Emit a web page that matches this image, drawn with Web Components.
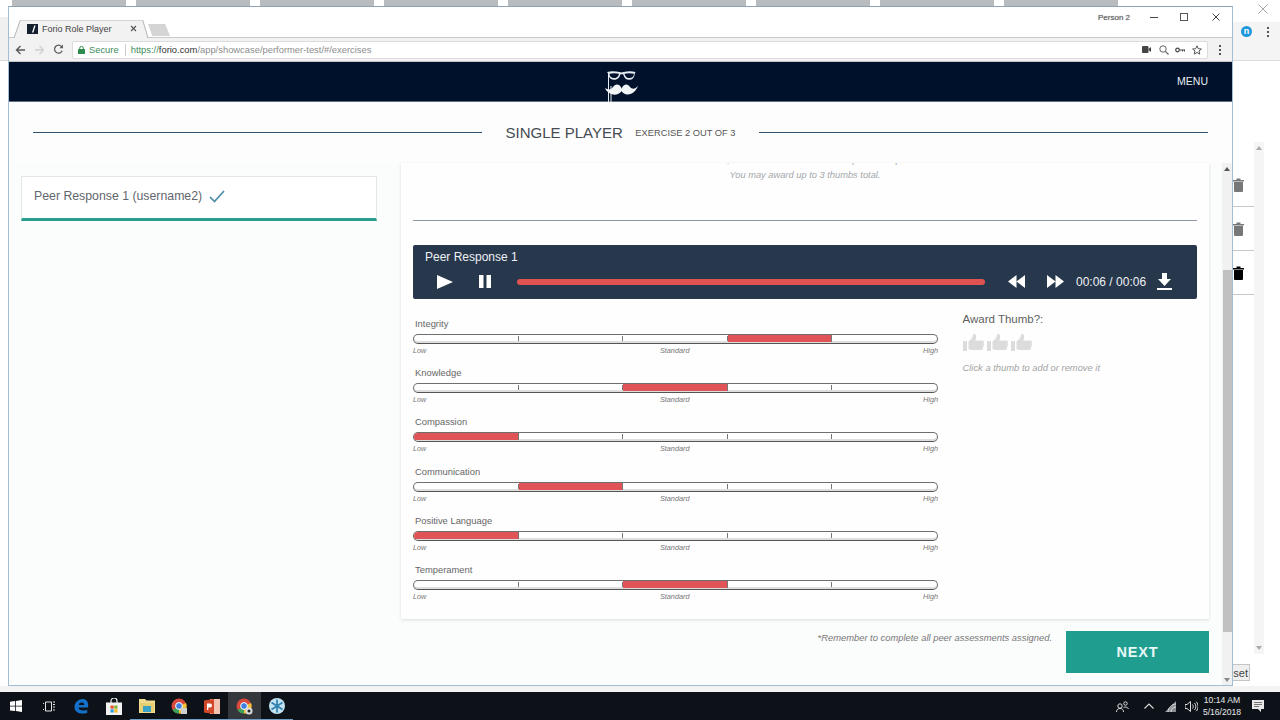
<!DOCTYPE html>
<html lang="en">
<head>
<meta charset="utf-8">
<title>Forio Role Player</title>
<style>
  html, body { margin: 0; height: 100%; overflow: hidden; background: #fff; }
  body { font-family: "Liberation Sans", Arial, sans-serif; display: flex; flex-direction: column; width: 1280px; height: 720px; }
</style>
</head>
<body>

<desk-top>
  <back-window></back-window>
  <browser-window tab-title="Forio Role Player" profile="Person 2">
    <app-nav></app-nav>
    <page-heading sub="EXERCISE 2 OUT OF 3">SINGLE PLAYER</page-heading>
    <exercise-view>
      <peer-card slot="side">Peer Response 1 (username2)</peer-card>
      <audio-bar title-text="Peer Response 1" time="00:06 / 00:06"></audio-bar>
      <rating-slider slot="ratings" level="3">Integrity</rating-slider>
      <rating-slider slot="ratings" level="2">Knowledge</rating-slider>
      <rating-slider slot="ratings" level="0">Compassion</rating-slider>
      <rating-slider slot="ratings" level="1">Communication</rating-slider>
      <rating-slider slot="ratings" level="0">Positive Language</rating-slider>
      <rating-slider slot="ratings" level="2">Temperament</rating-slider>
      <award-thumbs slot="award"></award-thumbs>
    </exercise-view>
  </browser-window>
</desk-top>
<task-bar></task-bar>

<script>
  (function page(customElements) {
    'use strict';

    // small helper, every element just sets its own shadow markup
    class Base extends HTMLElement {
      constructor() {
        super();
        this.attachShadow({mode: 'open'});
      }
      render(html) {
        this.shadowRoot.innerHTML = html;
      }
    }

    class DeskTop extends Base {
      connectedCallback() {
        this.render(`
          <style>
            :host { display: block; position: relative; height: 692px; background: #f3f3f3; overflow: hidden; }
          </style>
          <slot></slot>`);
      }
    }

    // the window behind the main one, only its edges show
    class BackWindow extends Base {
      connectedCallback() {
        const trash = (x, y, fill) => `
          <svg class="trash" style="left:${x}px;top:${y}px" width="11" height="14" viewBox="0 0 11 14">
            <path fill="${fill}" d="M0 2h11v1.4H0zM3.5 0.6h4V2h-4zM1 4h9v9a1 1 0 0 1-1 1H2a1 1 0 0 1-1-1z"/>
          </svg>`;
        this.render(`
          <style>
            :host { position: absolute; inset: 0 0 6px 0; background: #fff; display: block; }
            .tabs { display: flex; gap: 10px; padding-left: 12px; height: 6px; }
            .tabs i { width: 114px; background: #b9bcbf; }
            .tool { position: absolute; left: 1233px; right: 0; top: 22px; height: 38px; background: #f4f4f4; border-bottom: 1px solid #ddd; }
            .left { position: absolute; left: 0; top: 17px; width: 8px; height: 43px; background: #f0f0f0; border-bottom: 1px solid #d8d8d8; }
            .x { position: absolute; left: 1258px; top: 4px; }
            .n { position: absolute; left: 1241px; top: 26px; width: 11px; height: 11px; border-radius: 50%; background: #1f97dc; color: #fff; font: bold 9px/10px "Liberation Sans", sans-serif; text-align: center; }
            .dots { position: absolute; left: 1267px; top: 27px; width: 2px; height: 2px; background: #555; box-shadow: 0 4px #555, 0 8px #555; }
            .rule { position: absolute; left: 1233px; width: 21px; height: 1px; background: #c8c8c8; }
            .bar { position: absolute; left: 1254px; top: 142px; width: 10px; height: 512px; background: #f5f5f5; }
            .bar::before { content: ""; position: absolute; left: 2px; top: 4px; border: 3px solid transparent; border-bottom: 4px solid #aaa; border-top: 0; }
            .bar::after { content: ""; position: absolute; left: 2px; bottom: 4px; border: 3px solid transparent; border-top: 4px solid #aaa; border-bottom: 0; }
            .trash { position: absolute; }
            .set { position: absolute; left: 1228px; top: 664px; width: 22px; height: 17px; border: 1px solid #c4c4c4; background: #efefef; color: #444; font: 11px/17px "Liberation Sans", sans-serif; text-align: right; padding-right: 1px; box-sizing: border-box; overflow: hidden; }
          </style>
          <div class="tabs"><i></i><i></i><i></i><i></i><i></i><i></i><i></i><i></i><i></i></div>
          <div class="left"></div>
          <div class="tool"></div>
          <svg class="x" width="10" height="10" viewBox="0 0 10 10"><path d="M0.5 0.5l9 9M9.5 0.5l-9 9" stroke="#a5a5a5" fill="none"/></svg>
          <div class="n">n</div>
          <div class="dots"></div>
          ${trash(1233, 178, '#777')}
          ${trash(1233, 222, '#777')}
          ${trash(1233, 266, '#000')}
          <div class="rule" style="top:206px"></div>
          <div class="rule" style="top:250px"></div>
          <div class="rule" style="top:294px"></div>
          <div class="bar"></div>
          <div class="set">set</div>`);
      }
    }

    class BrowserWindow extends Base {
      connectedCallback() {
        const title = this.getAttribute('tab-title');
        const profile = this.getAttribute('profile');
        this.render(`
          <style>
            :host { position: absolute; left: 8px; top: 6px; width: 1225px; height: 680px; box-sizing: border-box; border: 1px solid #a3bdd3; border-top-color: #8ea4b6; background: #fbfcfc; display: flex; flex-direction: column; overflow: hidden; }
            .strip { height: 30px; background: #fff; display: flex; position: relative; flex: none; }
            .tab { position: relative; margin: 13px 0 0 5px; width: 134px; height: 18px; display: flex; align-items: center; padding: 0 0 0 13px; box-sizing: border-box; font-size: 9px; color: #444; }
            .tab svg.shape { position: absolute; left: 0; top: 0; }
            .tab span, .tab svg.fav, .tab svg.close { position: relative; }
            .tab svg.fav { margin-right: 4px; }
            .tab svg.close { position: absolute; left: 116px; top: 5px; }
            .newtab { margin: 17px 0 0 0; width: 22px; height: 12px; background: #d4d4d4; clip-path: polygon(0 0, 78% 0, 100% 100%, 20% 100%); }
            .controls { margin-left: auto; display: flex; align-items: center; height: 20px; font-size: 8px; color: #666; }
            .controls span { width: 41px; text-shadow: 0 0 1px #888; }
            .controls svg { display: block; }
            .ctl { width: 30px; display: flex; justify-content: center; }
            .tool { height: 25px; flex: none; background: #f2f2f2; border-top: 1px solid #c9c9c9; border-bottom: 1px solid #c4c4c4; box-sizing: border-box; display: flex; align-items: center; }
            .nav { width: 19px; display: flex; justify-content: center; }
            .omni { margin-left: 4px; width: 1137px; height: 18px; box-sizing: border-box; background: #fff; border: 1px solid #dcdcdc; border-radius: 2px; display: flex; align-items: center; font-size: 9.4px; color: #8d8d8d; padding-left: 5px; }
            .omni .sec { color: #3c8c58; margin: 0 6px 0 4px; font-size: 9.4px; }
            .omni .sep { width: 1px; height: 12px; background: #ccc; margin-right: 5px; }
            .omni .sch { color: #3c8c58; }
            .omni .dom { color: #333; }
            .right { margin-left: auto; display: flex; align-items: center; gap: 0; padding-right: 2px; }
            .right b { width: 16.6px; display: flex; justify-content: center; }
            .menu { width: 24px; display: flex; justify-content: center; }
            .page { flex: 1; min-height: 0; display: flex; flex-direction: column; }
          </style>
          <div class="strip">
            <div class="tab">
              <svg class="shape" width="136" height="18" viewBox="0 0 136 18"><path d="M0 18L6 1a1 1 0 0 1 1-1H128a1 1 0 0 1 1 1l5 17" fill="#f2f2f2" stroke="#b5b5b5"/></svg>
              <svg class="fav" width="11" height="10" viewBox="0 0 11 10"><rect width="11" height="10" fill="#14202e"/><path d="M5 8.5L7.2 1.5h1.4L6.4 8.5z" fill="#fff"/></svg>
              <span>${title}</span>
              <svg class="close" width="7" height="7" viewBox="0 0 7 7"><path d="M1 1l5 5M6 1l-5 5" stroke="#555" stroke-width="1.1"/></svg>
            </div>
            <div class="newtab"></div>
            <div class="controls">
              <span>${profile}</span>
              <div class="ctl"><svg width="8" height="8" viewBox="0 0 8 8"><path d="M0 4.5h8" stroke="#444"/></svg></div>
              <div class="ctl"><svg width="8" height="8" viewBox="0 0 8 8"><rect x="0.5" y="0.5" width="7" height="7" fill="none" stroke="#555"/></svg></div>
              <div class="ctl" style="width:33px"><svg width="8" height="8" viewBox="0 0 8 8"><path d="M0.5 0.5l7 7M7.5 0.5l-7 7" stroke="#444"/></svg></div>
            </div>
          </div>
          <div class="tool">
            <div class="nav" style="margin-left:2px"><svg width="11" height="10" viewBox="0 0 11 10"><path d="M10 5H2M5.5 1L1.5 5l4 4" fill="none" stroke="#5a5a5a" stroke-width="1.4"/></svg></div>
            <div class="nav"><svg width="11" height="10" viewBox="0 0 11 10"><path d="M1 5h8M5.5 1l4 4-4 4" fill="none" stroke="#d0d0d0" stroke-width="1.4"/></svg></div>
            <div class="nav"><svg width="11" height="11" viewBox="0 0 11 11"><path d="M9.2 6.8A4 4 0 1 1 8.6 2.6" fill="none" stroke="#5a5a5a" stroke-width="1.3"/><path d="M10 0.6v3.6H6.4z" fill="#5a5a5a"/></svg></div>
            <div class="omni">
              <svg width="7" height="8" viewBox="0 0 7 8"><rect y="3" width="7" height="5" rx="0.6" fill="#2f8a4e"/><path d="M1.7 3.5V2.2a1.8 1.8 0 0 1 3.6 0v1.3" fill="none" stroke="#2f8a4e"/></svg>
              <span class="sec">Secure</span><span class="sep"></span>
              <span><span class="sch">https://</span><span class="dom">forio.com</span>/app/showcase/performer-test/#/exercises</span>
              <div class="right">
                <b><svg width="9" height="7" viewBox="0 0 9 7"><rect width="6.5" height="7" rx="1" fill="#444"/><path d="M6.5 3L9 1v5L6.5 4z" fill="#444"/></svg></b>
                <b><svg width="10" height="10" viewBox="0 0 10 10"><circle cx="4" cy="4" r="3.2" fill="none" stroke="#666"/><path d="M6.4 6.4L9.5 9.5" stroke="#666" stroke-width="1.2"/></svg></b>
                <b><svg width="10" height="6" viewBox="0 0 10 6"><circle cx="2.5" cy="3" r="1.8" fill="none" stroke="#444" stroke-width="1.2"/><path d="M4.5 2.5H10V4.5H9V3.6H8V4.5H7V3.6H4.5z" fill="#444"/></svg></b>
                <b><svg width="10" height="10" viewBox="0 0 10 10"><path d="M5 0.8l1.3 2.9 3.1.3-2.4 2 .8 3.1L5 7.5 2.200 9.100 3 6 .6 4l3.100-.3z" fill="none" stroke="#444" stroke-width="0.9"/></svg></b>
              </div>
            </div>
            <div class="menu"><svg width="2" height="10" viewBox="0 0 2 10"><path d="M0 0h2v2H0zM0 4h2v2H0zM0 8h2v2H0z" fill="#555"/></svg></div>
          </div>
          <div class="page"><slot></slot></div>`);
      }
    }

    class AppNav extends Base {
      connectedCallback() {
        this.render(`
          <style>
            :host { display: flex; flex: none; height: 40px; background: #00112b; border-bottom: 1px solid #5c6f80; box-sizing: border-box; justify-content: center; position: relative; }
            svg { display: block; }
            .menu { position: absolute; right: 24px; top: 0; line-height: 38px; color: #e8edf2; font-size: 10.5px; }
          </style>
          <svg width="40" height="40" viewBox="0 0 40 40">
            <path d="M7.5 11v29M10 40V24" stroke="#e6ecf2" stroke-width="1" fill="none"/>
            <path d="M6 10c4-1.200 8-1 12.500 0 1.500.6 2.500.6 4 0 4-1 8-1.200 12 0l-.7 1.500c-.5 3.500-1.500 6-5 6.200-3.800.2-5.500-1.500-6.500-5.200-.8-.5-1.800-.5-3 0-.8 3.700-3 5.200-6.500 5.200-3.500-.1-5-2.500-5.500-6z" fill="#e6ecf2"/>
            <path d="M8.500 11.700c3-.7 6.500-.7 9.500 0-.6 3-2.500 4.400-5 4.400-2.700 0-4.200-1.500-4.500-4.400zM23.500 11.700c3-.7 6.500-.7 9.500 0-.3 2.900-1.800 4.400-4.500 4.400-2.500 0-4.400-1.400-5-4.400z" fill="#00112b"/>
            <path d="M20.500 26C18 21 14 22 12 25 10 28 7 28 4 26 6 31 12 34 17 32c2-1 3-2 3.500-3 .5 1 2.500 3 5.500 3.500 5 .5 9-3.500 11-8.500-4 4-6 3-8 1-2-3-6-4-8.500 2z" fill="#f2f5f7"/>
          </svg>
          <div class="menu">MENU</div>`);
      }
    }

    class PageHeading extends Base {
      connectedCallback() {
        this.render(`
          <style>
            :host { display: flex; flex: none; height: 61px; align-items: center; padding: 0 24px; background: #fdfdfd; color: #454b52; }
            .line { flex: 1; height: 1px; background: #33526d; }
            .title { font-size: 15px; margin: 0 12.500px 0 24px; line-height: 20px; }
            .sub { font-size: 9.300px; margin-right: 24px; color: #555; }
          </style>
          <div class="line"></div>
          <div class="title"><slot></slot></div>
          <div class="sub">${this.getAttribute('sub')}</div>
          <div class="line"></div>`);
      }
    }

    class ExerciseView extends Base {
      connectedCallback() {
        this.render(`
          <style>
            :host { display: flex; flex: 1; min-height: 0; padding-left: 12px; }
            .side { width: 356px; flex: none; padding-top: 13px; margin-right: 24px; }
            .col { width: 808px; flex: none; display: flex; flex-direction: column; }
            .panel { height: 456px; flex: none; background: #fefefe; box-shadow: 0 1px 3px rgba(0,0,0,.13); padding: 0 12px; box-sizing: border-box; overflow: hidden; }
            .note { margin-top: -10px; text-align: center; font-style: italic; font-size: 9.300px; line-height: 15px; color: #a4a7ab; }
            hr { border: 0; height: 1px; background: #8d95a6; margin: 37px 0 24px; }
            .rates { display: flex; margin-top: 18px; }
            .rows { width: 525px; flex: none; }
            .award { margin-left: 24.500px; }
            .foot { display: flex; justify-content: flex-end; padding-top: 12px; }
            .remind { font-size: 9.400px; font-style: italic; color: #777; line-height: 14px; margin-right: 14px; }
            .next { width: 143px; height: 42px; background: #1f9e90; color: #e8f8f6; font-weight: bold; font-size: 14.500px; letter-spacing: .8px; display: flex; align-items: center; justify-content: center; }
            .scroll { width: 10px; margin-left: 13px; flex: none; background: #f1f1f1; position: relative; }
            .thumb { position: absolute; left: 1px; right: 0; top: 107px; height: 362px; background: #c1c1c1; }
            .up, .down { position: absolute; left: 2px; border: 3px solid transparent; }
            .up { top: 4px; border-top: 0; border-bottom: 4px solid #555; }
            .down { bottom: 3px; border-bottom: 0; border-top: 4px solid #888; }
          </style>
          <div class="side"><slot name="side"></slot></div>
          <div class="col">
            <div class="panel">
              <div class="note">Remember, thumbs are awarded for exceptional responses.<br>You may award up to 3 thumbs total.</div>
              <hr>
              <slot></slot>
              <div class="rates">
                <div class="rows"><slot name="ratings"></slot></div>
                <div class="award"><slot name="award"></slot></div>
              </div>
            </div>
            <div class="foot">
              <div class="remind">*Remember to complete all peer assessments assigned.</div>
              <div class="next">NEXT</div>
            </div>
          </div>
          <div class="scroll"><i class="up"></i><div class="thumb"></div><i class="down"></i></div>`);
      }
    }

    class PeerCard extends Base {
      connectedCallback() {
        this.render(`
          <style>
            :host { display: flex; align-items: center; height: 45px; box-sizing: border-box; padding: 0 12px 3px; background: #fff; border: 1px solid #e6e6e6; border-bottom: 3px solid #2a9d90; font-size: 12.300px; color: #5f666d; }
            svg { margin-left: 7px; }
          </style>
          <slot></slot>
          <svg width="16" height="13" viewBox="0 0 16 13"><path d="M1 7l4.500 4.500L15 1" fill="none" stroke="#4a8ca8" stroke-width="1.700"/></svg>`);
      }
    }

    class AudioBar extends Base {
      connectedCallback() {
        this.render(`
          <style>
            :host { display: block; height: 54px; background: #27384d; border-radius: 2px; color: #eef1f4; box-sizing: border-box; padding: 5px 12px 0; }
            .name { font-size: 12px; line-height: 14px; }
            .row { display: flex; align-items: center; height: 27px; margin-top: 4px; }
            svg { display: block; flex: none; }
            .bar { width: 468px; height: 6px; background: #df5353; border-radius: 3px; margin: 0 23px 0 26px; flex: none; }
            .time { font-size: 12px; width: 70px; margin: 0 11px 0 12px; white-space: nowrap; }
          </style>
          <div class="name">${this.getAttribute('title-text')}</div>
          <div class="row">
            <svg style="margin-left:12px" width="16" height="14" viewBox="0 0 16 14"><path d="M0 0l16 7-16 7z" fill="#fff"/></svg>
            <svg style="margin-left:26px" width="12" height="13" viewBox="0 0 12 13"><path d="M0 0h4.500v13H0zM7.500 0H12v13H7.500z" fill="#fff"/></svg>
            <div class="bar"></div>
            <svg width="17" height="13" viewBox="0 0 17 13"><path d="M8.500 0v13L0 6.500zM17 0v13L8.500 6.500z" fill="#fff"/></svg>
            <svg style="margin-left:22px" width="17" height="13" viewBox="0 0 17 13"><path d="M0 0v13l8.500-6.500zM8.500 0v13L17 6.500z" fill="#fff"/></svg>
            <div class="time">${this.getAttribute('time')}</div>
            <svg width="15" height="17" viewBox="0 0 15 17"><path d="M5 0h5v6h4l-6.500 7L1 6h4z" fill="#fff"/><path d="M0 15h15v2H0z" fill="#fff"/></svg>
          </div>`);
      }
    }

    class RatingSlider extends Base {
      connectedCallback() {
        const level = Number(this.getAttribute('level'));
        let cells = '';
        for (let i = 0; i < 5; i++) {
          cells += `<i class="${i === level ? 'on' : ''}"></i>`;
        }
        this.render(`
          <style>
            :host { display: block; height: 49.200px; box-sizing: border-box; color: #666; }
            .label { font-size: 9.400px; line-height: 14px; padding-left: 2px; height: 17px; }
            .track { height: 10px; box-sizing: border-box; border: 1px solid #6f6f6f; border-bottom-color: #555; border-radius: 5px; background: #fff; display: grid; grid-template-columns: repeat(5, 1fr); overflow: hidden; box-shadow: inset 0 -2px 0 #dedede; }
            i { display: block; border-right: 1px solid #777; margin: 1px 0 2px; }
            i:last-child { border-right: 0; }
            i.on { background: #e05458; margin: 0 0 1px; }
            .scale { display: flex; justify-content: space-between; font-size: 7.300px; font-style: italic; line-height: 14px; color: #777; }
          </style>
          <div class="label"><slot></slot></div>
          <div class="track">${cells}</div>
          <div class="scale"><span>Low</span><span>Standard</span><span>High</span></div>`);
      }
    }

    class AwardThumbs extends Base {
      connectedCallback() {
        const thumb = `<svg width="24" height="17" viewBox="0 0 24 17"><path d="M0 7h4v10H0zM5.500 7.500c2-1.500 4-3.500 5-7.500 2.500-.3 3.500 2 2 6.500H19c2 0 2.500 2 1.500 3 .8 1 .5 2.500-.5 3 .3 1 0 2.500-1.500 3.500H9c-1.500 0-2.500-.5-3.500-1z" fill="#dcdcdc"/></svg>`;
        this.render(`
          <style>
            :host { display: block; }
            .head { font-size: 11.500px; line-height: 14px; color: #5f5f5f; margin-top: -5px; }
            .thumbs { display: flex; margin-top: 8px; height: 17px; }
            svg { display: block; }
            .hint { font-size: 9.400px; font-style: italic; color: #a3a3a3; margin-top: 11px; line-height: 12px; white-space: nowrap; }
          </style>
          <div class="head">Award Thumb?:</div>
          <div class="thumbs">${thumb}${thumb}${thumb}</div>
          <div class="hint">Click a thumb to add or remove it</div>`);
      }
    }

    class TaskBar extends Base {
      connectedCallback() {
        const chrome = (extra) => `<svg width="17" height="17" viewBox="0 0 17 17"><circle cx="8" cy="8" r="7.500" fill="#d8493c"/><path d="M8 8L1.500 12A7.500 7.500 0 0 0 8 15.500z" fill="#3da35a"/><path d="M8 8v7.500a7.500 7.500 0 0 0 7-10.500z" fill="#f1c233"/><circle cx="8" cy="8" r="3.400" fill="#3f7fe0" stroke="#fff"/>${extra}</svg>`;
        this.render(`
          <style>
            :host { display: flex; height: 28px; flex: none; background: #0d1219; align-items: stretch; position: relative; color: #e8e8e8; }
            .cell { width: 32.600px; display: flex; align-items: center; justify-content: center; box-sizing: border-box; }
            .cell.run { border-bottom: 1px solid #6f9ec7; padding-top: 1px; }
            .cell.cur { background: #34373c; }
            svg { display: block; }
            .tray { margin-left: auto; display: flex; padding-right: 5.500px; }
            .tray div { display: flex; align-items: center; justify-content: center; }
            .clock { font-size: 8.600px; line-height: 12px; text-align: center; white-space: nowrap; flex-direction: column; width: 39px; }
          </style>
          <div class="cell"><svg width="12" height="12" viewBox="0 0 12 12"><path d="M0 1.700l5-.7v4.700H0zM5.800.9L12 0v5.700H5.800zM0 6.400h5v4.700l-5-.7zM5.800 6.400H12V12l-6.200-.9z" fill="#fff"/></svg></div>
          <div class="cell"><svg width="12" height="11" viewBox="0 0 12 11"><path d="M2.500 1h6v9h-6zM0 2.500h1M0 8.500h1M10 1h2M10 3.500h2M10 6h2M10 9h2" fill="none" stroke="#e4e4e4"/></svg></div>
          <div class="cell"><svg width="15" height="15" viewBox="0 0 15 15"><path d="M14 8.500H4.500c.2 2.600 3.800 4.200 8.700 2.200v3c-5.700 2.200-12.700.4-12.700-5.700C.5 3 5 0 8.500 0 12.500 0 15 3 14 8.500zM10.300 6c0-3.200-5-3.200-5.600 0z" fill="#1570c9"/></svg></div>
          <div class="cell"><svg width="16" height="17" viewBox="0 0 16 17"><path d="M0 4.500h16V17H0z" fill="#f2f2f2"/><path d="M5 5V3a3 3 0 0 1 6 0v2" fill="none" stroke="#f2f2f2" stroke-width="1.200"/><path d="M4.500 7.500h3.200v3.200H4.500z" fill="#e2522f"/><path d="M8.300 7.500h3.200v3.200H8.300z" fill="#7fb52c"/><path d="M4.500 11.300h3.200v3.200H4.500z" fill="#2a9be0"/><path d="M8.300 11.300h3.200v3.200H8.300z" fill="#f4b81c"/></svg></div>
          <div class="cell run"><svg width="16" height="14" viewBox="0 0 16 14"><path d="M0 0h6l1.500 1.500H16V14H0z" fill="#f0dc8c"/><path d="M1 4h14v9H1z" fill="#e8cf72"/><path d="M4 7h8v6H4z" fill="#3ba3c8"/></svg></div>
          <div class="cell run">${chrome('<path d="M10 10h6v6h-6z" fill="#cfcfcf"/>')}</div>
          <div class="cell run"><svg width="16" height="15" viewBox="0 0 16 15"><path d="M6 0h10v15H6z" fill="#f4c4b2"/><path d="M0 1.500l10-1.500v15L0 13.500z" fill="#d1492a"/><path d="M3 4.500h3a2 2 0 0 1 0 4H4.300v2.500H3z" fill="#fff"/></svg></div>
          <div class="cell run cur">${chrome('<circle cx="13" cy="13" r="3.500" fill="#dcdcdc"/><circle cx="13" cy="13" r="1.500" fill="#222"/>')}</div>
          <div class="cell run"><svg width="16" height="16" viewBox="0 0 16 16"><circle cx="8" cy="8" r="8" fill="#c4e3f2"/><path d="M8 1.500v13M2.500 4.500l11 7M13.500 4.500l-11 7" stroke="#2f7fae" stroke-width="1.700"/></svg></div>
          <div class="tray">
            <div style="width:27px"><svg width="13" height="11" viewBox="0 0 13 11"><circle cx="4" cy="5" r="2.200" fill="none" stroke="#ddd"/><path d="M0.500 11c0-2.500 1.500-3.500 3.500-3.500S7.500 8.500 7.500 11" fill="none" stroke="#ddd"/><circle cx="9.500" cy="2.500" r="1.700" fill="none" stroke="#ddd"/><path d="M7.500 6.500c1.300-.8 4-.8 5 1.500" fill="none" stroke="#ddd"/></svg></div>
            <div style="width:27px"><svg width="10" height="6" viewBox="0 0 10 6"><path d="M.5 5.500L5 1l4.500 4.500" fill="none" stroke="#ddd" stroke-width="1.100"/></svg></div>
            <div style="width:17px"><svg width="12" height="11" viewBox="0 0 12 11"><path d="M0 11L11 0v11z" fill="#8b8f95"/><path d="M3 11C3 7 7 3 11 3M6 11c0-3 2-5 5-5" stroke="#e0e0e0" fill="none"/></svg></div>
            <div style="width:23px"><svg width="13" height="11" viewBox="0 0 13 11"><path d="M0 3.500h2L5.500.5v10L2 7.500H0z" fill="none" stroke="#ddd"/><path d="M7.500 3.500c1 1.200 1 2.800 0 4M9.500 2c1.800 2 1.800 5 0 7M11.300.8c2.300 2.800 2.300 6.600 0 9.400" fill="none" stroke="#ddd"/></svg></div>
            <div class="clock"><span>10:14 AM</span><span>5/16/2018</span></div>
            <div style="width:33px"><svg width="12" height="12" viewBox="0 0 12 12"><path d="M0 0h12v9H9v3L6 9H0z" fill="#e8e8e8"/><path d="M2 2.500h8M2 4.500h8M2 6.500h5" stroke="#555" stroke-width="0.800"/></svg></div>
          </div>`);
      }
    }

    customElements.define('desk-top', DeskTop);
    customElements.define('back-window', BackWindow);
    customElements.define('browser-window', BrowserWindow);
    customElements.define('app-nav', AppNav);
    customElements.define('page-heading', PageHeading);
    customElements.define('exercise-view', ExerciseView);
    customElements.define('peer-card', PeerCard);
    customElements.define('audio-bar', AudioBar);
    customElements.define('rating-slider', RatingSlider);
    customElements.define('award-thumbs', AwardThumbs);
    customElements.define('task-bar', TaskBar);
  })(window.customElements);
</script>
</body>
</html>
